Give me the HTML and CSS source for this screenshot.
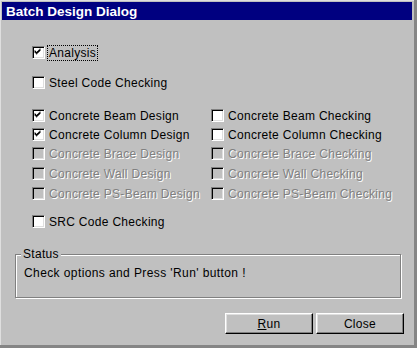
FILE: index.html
```html
<!DOCTYPE html>
<html lang="en">
  <head>
    <meta charset="UTF-8" />
    <title>Batch Design Dialog</title>
    <link rel="stylesheet" href="styles.css">
  </head>
  <body>
    <div class="window">
      <div class="titlebar">Batch Design Dialog</div>

      <div class="options">
        <label class="row">
          <span class="check checked"></span>
          <span class="focus">Analysis</span>
        </label>
        <label class="row row-steel">
          <span class="check"></span>
          <span>Steel Code Checking</span>
        </label>

        <div class="concrete-grid">
          <label class="row">
            <span class="check checked"></span>
            <span>Concrete Beam Design</span>
          </label>
          <label class="row">
            <span class="check"></span>
            <span>Concrete Beam Checking</span>
          </label>
          <label class="row">
            <span class="check checked"></span>
            <span>Concrete Column Design</span>
          </label>
          <label class="row">
            <span class="check"></span>
            <span>Concrete Column Checking</span>
          </label>
          <label class="row disabled">
            <span class="check"></span>
            <span>Concrete Brace Design</span>
          </label>
          <label class="row disabled">
            <span class="check"></span>
            <span>Concrete Brace Checking</span>
          </label>
          <label class="row disabled">
            <span class="check"></span>
            <span>Concrete Wall Design</span>
          </label>
          <label class="row disabled">
            <span class="check"></span>
            <span>Concrete Wall Checking</span>
          </label>
          <label class="row disabled">
            <span class="check"></span>
            <span>Concrete PS-Beam Design</span>
          </label>
          <label class="row disabled">
            <span class="check"></span>
            <span>Concrete PS-Beam Checking</span>
          </label>
        </div>

        <label class="row row-src">
          <span class="check"></span>
          <span>SRC Code Checking</span>
        </label>
      </div>

      <div class="group">
        <span class="group-title">Status</span>
        <div class="status-text">Check options and Press 'Run' button !</div>
      </div>

      <div class="buttons">
        <button class="btn"><u>R</u>un</button>
        <button class="btn">Close</button>
      </div>
    </div>

    <svg width="0" height="0" style="position: absolute">
      <defs>
        <symbol id="tick" viewBox="0 0 13 13">
          <path
            d="M3 5h1v3H3z M4 6h1v3H4z M5 7h1v3H5z M6 6h1v3H6z M7 5h1v3H7z M8 4h1v3H8z M9 3h1v3H9z"
            fill="#000"
          />
        </symbol>
      </defs>
    </svg>

    <script>
      // put the tick glyph into every checked box
      document.querySelectorAll(".check.checked").forEach(function (box) {
        box.innerHTML =
          '<svg width="11" height="11" viewBox="1 1 11 11"><use href="#tick"/></svg>';
      });
    </script>
  </body>
</html>
```

FILE: styles.css
```css
html,
body {
  margin: 0;
  padding: 0;
  background: #858585;
}
body {
  font-family: "Liberation Sans", Arial, sans-serif;
  font-size: 12px;
  color: #000;
}
.window {
  width: 414px;
  height: 345px;
  box-sizing: border-box;
  padding: 2px;
  background: #c0c0c0;
  border-top: 1px solid #dfdfdf;
  border-left: 1px solid #dfdfdf;
}
.titlebar {
  height: 18px;
  margin-top: -1px;
  margin-left: -1px;
  padding-left: 4px;
  background: #000080;
  color: #fff;
  font-weight: bold;
  font-size: 13.5px;
  line-height: 19px;
}
.options {
  padding-left: 29px;
  margin-top: 23px;
}
.row {
  display: flex;
  align-items: center;
  height: 19px;
  white-space: nowrap;
  letter-spacing: 0.3px;
}
.row-steel {
  margin-top: 11px;
  margin-bottom: 14px;
}
.concrete-grid {
  display: grid;
  grid-template-columns: 179px 1fr;
  grid-template-rows: 19px 19px 20px 20px 20px;
}
.row-src {
  margin-top: 8px;
}
.check {
  width: 13px;
  height: 13px;
  box-sizing: border-box;
  flex: none;
  margin-right: 4px;
  background: #fff;
  border: 1px solid;
  border-color: #808080 #fff #fff #808080;
  box-shadow: inset 1px 1px 0 #000, inset -1px -1px 0 #dfdfdf;
}
.check svg {
  display: block;
}
.focus {
  outline: 1px dotted #000;
  outline-offset: 0;
  padding: 0 1px;
  margin-left: -1px;
}
.disabled {
  color: #808080;
  text-shadow: 1px 1px 0 #fff;
}
.disabled .check {
  background: #c0c0c0;
}
.group {
  position: relative;
  margin: 23px 11px 0 12px;
  height: 42px;
  border: 1px solid #808080;
  box-shadow: 1px 1px 0 #fff, inset 1px 1px 0 #fff;
}
.group-title {
  position: absolute;
  top: -8px;
  left: 5px;
  padding: 0 2px;
  background: #c0c0c0;
  letter-spacing: 0.3px;
}
.status-text {
  padding: 11px 0 0 8px;
  line-height: 14px;
  letter-spacing: 0.4px;
}
.buttons {
  display: flex;
  justify-content: flex-end;
  gap: 3px;
  margin: 15px 8px 0 0;
}
.btn {
  width: 88px;
  height: 21px;
  box-sizing: border-box;
  padding: 0;
  font-family: "Liberation Sans", Arial, sans-serif;
  font-size: 12px;
  letter-spacing: 0.3px;
  color: #000;
  background: #c0c0c0;
  border: 1px solid;
  border-color: #fff #000 #000 #fff;
  box-shadow: inset -1px -1px 0 #808080, inset 1px 1px 0 #dfdfdf;
}
```
